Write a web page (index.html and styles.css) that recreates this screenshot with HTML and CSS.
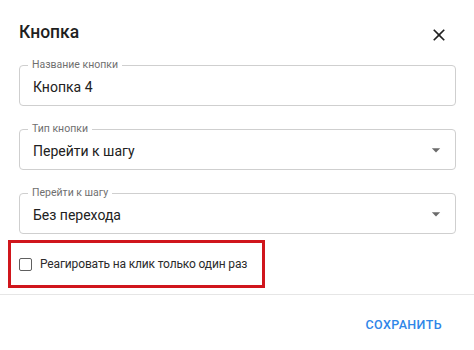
FILE: index.html
```html
<!DOCTYPE html>
<html lang="ru">
<head>
    <meta charset="UTF-8">
    <meta name="viewport" content="width=device-width, initial-scale=1.0">
    <title>Кнопка</title>
    <link rel="stylesheet" href="styles.css">
</head>
<body>
    <div class="dialog">
        <div class="dialog-header">
            <h2 class="dialog-title">Кнопка</h2>
            <button class="close-btn" aria-label="Закрыть">
                <svg viewBox="0 0 24 24" width="20" height="20">
                    <path d="M19 6.41 17.59 5 12 10.59 6.41 5 5 6.41 10.59 12 5 17.59 6.41 19 12 13.41 17.59 19 19 17.59 13.41 12z" fill="#212121"/>
                </svg>
            </button>
        </div>

        <div class="dialog-body">
            <div class="field">
                <span class="field-label">Название кнопки</span>
                <span class="field-value">Кнопка 4</span>
            </div>
            <div class="field select">
                <span class="field-label">Тип кнопки</span>
                <span class="field-value">Перейти к шагу</span>
                <svg class="arrow" viewBox="0 0 24 24" width="20" height="20"><path d="M7 10l5 5 5-5z" fill="#6b6b6b"/></svg>
            </div>
            <div class="field select">
                <span class="field-label">Перейти к шагу</span>
                <span class="field-value">Без перехода</span>
                <svg class="arrow" viewBox="0 0 24 24" width="20" height="20"><path d="M7 10l5 5 5-5z" fill="#6b6b6b"/></svg>
            </div>

            <div class="highlight">
                <label class="check-row">
                    <span class="checkbox"></span>
                    <span class="check-text">Реагировать на клик только один раз</span>
                </label>
            </div>
        </div>

        <div class="divider"></div>

        <div class="dialog-actions">
            <button class="save-btn">Сохранить</button>
        </div>
    </div>
</body>
</html>
```

FILE: styles.css
```css
body {
    margin: 0;
    background-color: #ffffff;
    font-family: Roboto, "Liberation Sans", Arial, sans-serif;
    color: #212121;
}
.dialog {
    width: 474px;
    height: 350px;
    overflow: hidden;
}
.dialog-header {
    display: flex;
    justify-content: space-between;
    align-items: flex-start;
    padding: 20px 25px 0 19px;
}
.dialog-title {
    margin: 0;
    font-size: 17.5px;
    font-weight: 500;
    line-height: 24px;
    color: #1f1f1f;
}
.close-btn {
    background: none;
    border: none;
    padding: 0;
    margin-top: 5px;
    width: 20px;
    height: 20px;
    cursor: pointer;
}
.close-btn svg {
    display: block;
}
.dialog-body {
    padding: 20px 18px 0 19px;
}
.field {
    position: relative;
    box-sizing: border-box;
    height: 41px;
    border: 1px solid #cfcfcf;
    border-radius: 4px;
    display: flex;
    align-items: center;
    justify-content: space-between;
    padding: 2px 9px 0 13px;
    margin-bottom: 23px;
}
.field-label {
    position: absolute; /* sits on the border notch */
    top: -7px;
    left: 8px;
    padding: 0 4px;
    background-color: #ffffff;
    font-size: 10.5px;
    line-height: 12px;
    color: #6f6f6f;
}
.field-value {
    font-size: 14px;
    line-height: 16px;
    color: #212121;
}
.arrow {
    display: block;
    margin-top: -2px;
}
.highlight {
    margin: -17px 0 0 -11px;
    width: 257px;
    box-sizing: border-box;
    height: 48px;
    border: 3px solid #d0161c;
    display: flex;
    align-items: center;
    padding-left: 8px;
}
.check-row {
    display: flex;
    align-items: center;
    gap: 8px;
    cursor: pointer;
}
.checkbox {
    box-sizing: border-box;
    width: 13px;
    height: 13px;
    border: 1.5px solid #5f5f5f;
    border-radius: 2px;
}
.check-text {
    font-size: 12px;
    letter-spacing: -0.15px;
    line-height: 16px;
    white-space: nowrap;
    color: #2b2b2b;
}
.divider {
    margin-top: 6px;
    height: 1px;
    background-color: #e6e6e6;
}
.dialog-actions {
    display: flex;
    justify-content: flex-end;
    padding: 20px 32px 0 0;
}
.save-btn {
    background: none;
    border: none;
    padding: 0;
    font-family: inherit;
    font-size: 12.5px;
    font-weight: 500;
    letter-spacing: 0.4px;
    line-height: 20px;
    text-transform: uppercase;
    color: #2f86e8;
    cursor: pointer;
}
```
